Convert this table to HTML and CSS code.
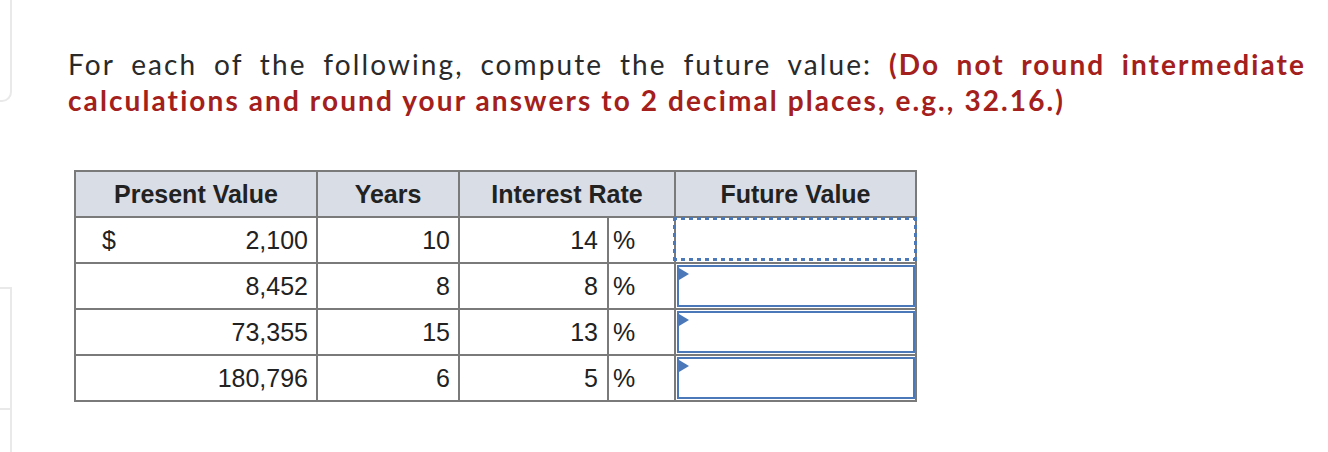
FILE: index.html
```html
<!DOCTYPE html>
<html lang="en">
<head>
<meta charset="utf-8">
<title>Future value</title>
<link rel="stylesheet" href="styles.css">
</head>
<body>
<div class="page">
  <aside class="side">
    <div class="card card-top"></div>
    <div class="card card-mid"></div>
    <div class="card card-low"></div>
  </aside>
  <main class="main">
    <p class="prompt">For each of the following, compute the future value: <strong class="note">(Do not round intermediate calculations and round your answers to 2 decimal places, e.g., 32.16.)</strong></p>
    <table class="grid">
      <colgroup>
        <col class="w-pv">
        <col class="w-yr">
        <col class="w-rate">
        <col class="w-pct">
        <col class="w-fv">
      </colgroup>
      <thead>
        <tr>
          <th>Present Value</th>
          <th>Years</th>
          <th colspan="2">Interest Rate</th>
          <th>Future Value</th>
        </tr>
      </thead>
      <tbody>
        <tr>
          <td class="pv"><span class="cur">$</span>2,100</td>
          <td class="yr">10</td>
          <td class="rate">14</td>
          <td class="pct">%</td>
          <td class="fv"><div class="answer focused"></div></td>
        </tr>
        <tr>
          <td class="pv">8,452</td>
          <td class="yr">8</td>
          <td class="rate">8</td>
          <td class="pct">%</td>
          <td class="fv"><div class="answer flagged"></div></td>
        </tr>
        <tr>
          <td class="pv">73,355</td>
          <td class="yr">15</td>
          <td class="rate">13</td>
          <td class="pct">%</td>
          <td class="fv"><div class="answer flagged"></div></td>
        </tr>
        <tr>
          <td class="pv">180,796</td>
          <td class="yr">6</td>
          <td class="rate">5</td>
          <td class="pct">%</td>
          <td class="fv"><div class="answer flagged"></div></td>
        </tr>
      </tbody>
    </table>
  </main>
</div>
</body>
</html>
```

FILE: styles.css
```css
html, body {
  margin: 0;
  padding: 0;
  background: #ffffff;
}

.page {
  display: flex;
  width: 1328px;
  height: 452px;
  overflow: hidden;
}

.side {
  flex: 0 0 12px;
  display: flex;
  flex-direction: column;
}

.card {
  box-sizing: border-box;
  border-color: #e9e9e9;
  border-style: solid;
  border-width: 0;
}

.card-top {
  height: 102px;
  border-right-width: 2px;
  border-bottom-width: 2px;
  border-bottom-right-radius: 10px;
}

.card-mid {
  margin-top: 185px;
  height: 123px;
  border-top-width: 2px;
  border-right-width: 2px;
  border-bottom-width: 2px;
}

.card-low {
  flex: 1;
  border-right-width: 2px;
}

.main {
  flex: 1;
  padding-left: 56px;
  padding-top: 46px;
}

.prompt {
  margin: 0;
  width: 1238px;
  font-family: Lato, "Open Sans", sans-serif;
  font-size: 28px;
  letter-spacing: 2.1px;
  line-height: 36px;
  color: #2a2a2a;
  text-align: justify;
}

.note {
  color: #a3201c;
  font-weight: 700;
}

.grid {
  margin-top: 52px;
  margin-left: 6px;
  width: 843px;
  table-layout: fixed;
  border-collapse: collapse;
  font-family: "Liberation Sans", Arial, sans-serif;
  font-size: 25px;
  color: #222222;
}

.w-pv { width: 242px; }
.w-yr { width: 142px; }
.w-rate { width: 149px; }
.w-pct { width: 67px; }
.w-fv { width: 241px; }

.grid th,
.grid td {
  border: 2px solid #7a7a7a;
  height: 44px;
  padding: 0;
}

.grid th {
  background: #d9dde6;
  font-weight: 700;
  text-align: center;
}

.pv {
  text-align: right;
  padding-right: 8px !important;
}

.cur {
  float: left;
  padding-left: 26px;
}

.yr {
  text-align: right;
  padding-right: 8px !important;
}

.rate {
  text-align: right;
  padding-right: 9px !important;
}

.pct {
  text-align: left;
  padding-left: 4px !important;
}

.fv {
  vertical-align: top;
}

.answer {
  position: relative;
  box-sizing: border-box;
  height: 42px;
  margin: 1px 0 1px 1px;
  border: 2px solid #4a78b8;
  background: #ffffff;
}

.answer.flagged::before {
  content: "";
  position: absolute;
  left: 0;
  top: 1px;
  border-left: 10px solid #4a78b8;
  border-top: 6px solid transparent;
  border-bottom: 6px solid transparent;
}

.answer.focused {
  border-color: transparent;
}

.answer.focused::after {
  content: "";
  position: absolute;
  left: -6px;
  right: -4px;
  top: -4px;
  bottom: -2px;
  background:
    repeating-linear-gradient(90deg, #4a78b8 0 4px, transparent 4px 8px) top left / 100% 3px no-repeat,
    repeating-linear-gradient(90deg, #4a78b8 0 4px, transparent 4px 8px) bottom left / 100% 3px no-repeat,
    repeating-linear-gradient(180deg, #4a78b8 0 4px, transparent 4px 8px) top left / 3px 100% no-repeat,
    repeating-linear-gradient(180deg, #4a78b8 0 4px, transparent 4px 8px) top right / 3px 100% no-repeat;
}
```
